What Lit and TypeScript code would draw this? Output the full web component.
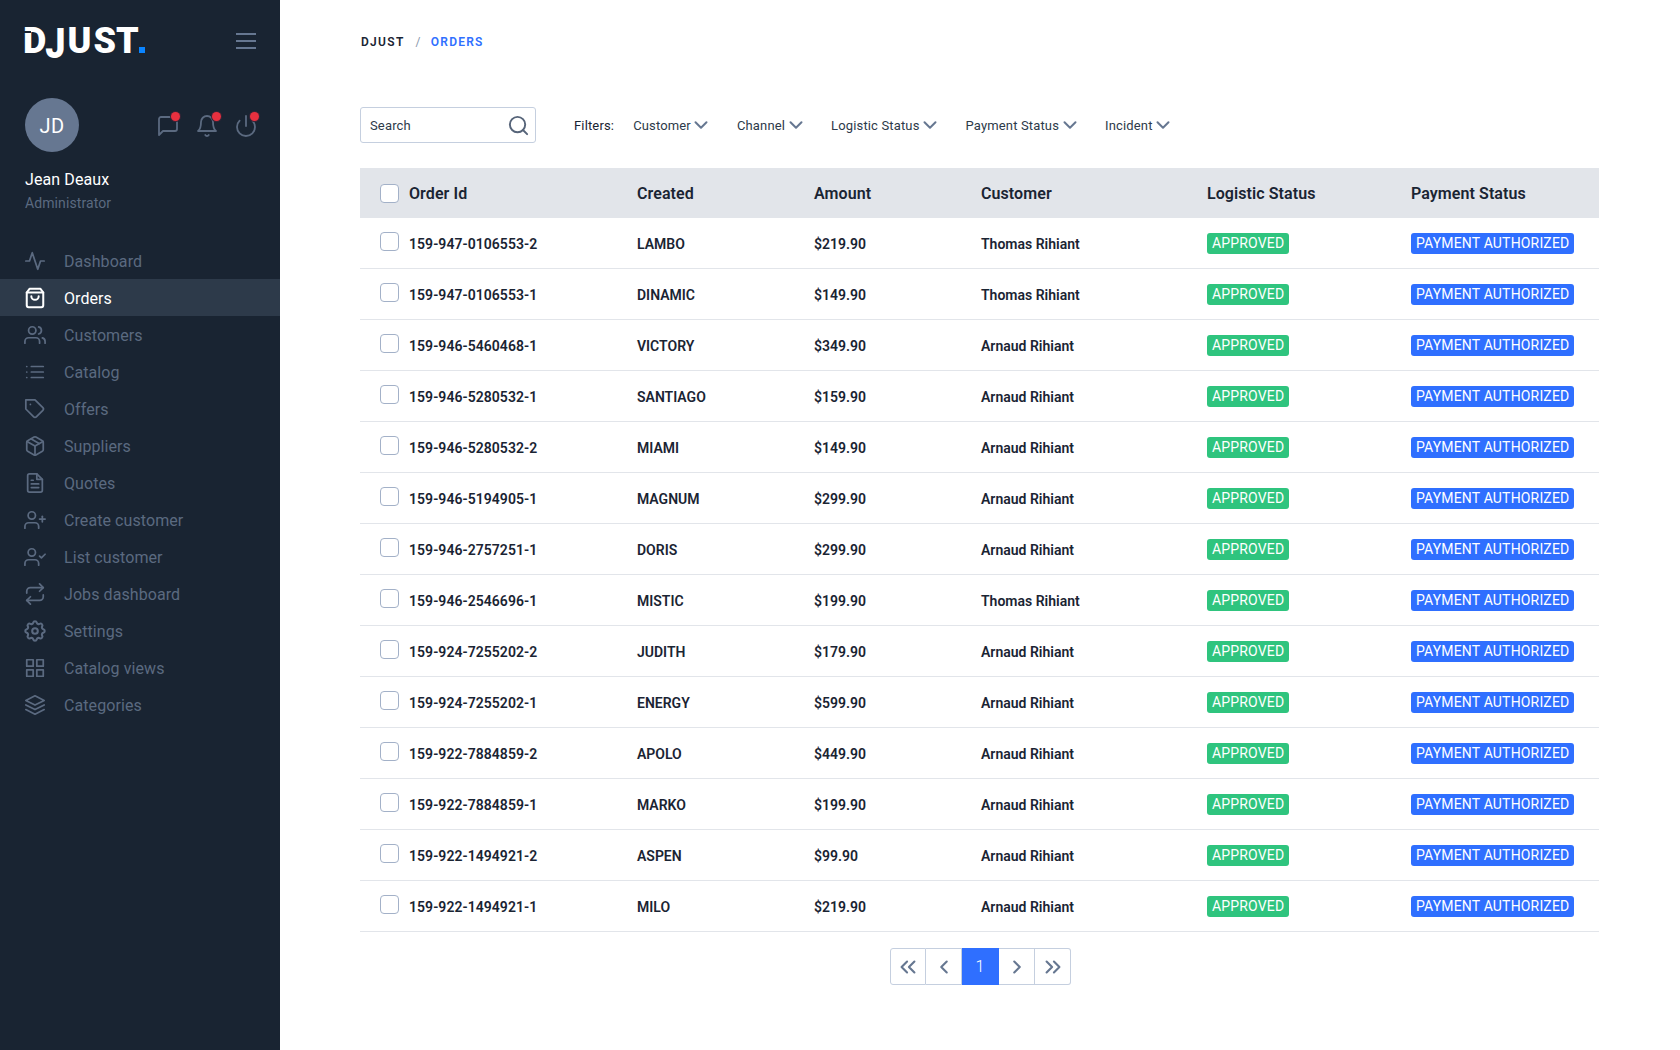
import { LitElement, html, css, svg } from "lit";
import { customElement } from "lit/decorators.js";

const icons: Record<string, unknown> = {
  activity: svg`<polyline points="22 12 18 12 15 21 9 3 6 12 2 12"/>`,
  bag: svg`<path d="M6 2L3 6v14a2 2 0 0 0 2 2h14a2 2 0 0 0 2-2V6l-3-4z"/><line x1="3" y1="6" x2="21" y2="6"/><path d="M16 10a4 4 0 0 1-8 0"/>`,
  users: svg`<path d="M17 21v-2a4 4 0 0 0-4-4H5a4 4 0 0 0-4 4v2"/><circle cx="9" cy="7" r="4"/><path d="M23 21v-2a4 4 0 0 0-3-3.87"/><path d="M16 3.13a4 4 0 0 1 0 7.75"/>`,
  list: svg`<line x1="8" y1="6" x2="21" y2="6"/><line x1="8" y1="12" x2="21" y2="12"/><line x1="8" y1="18" x2="21" y2="18"/><line x1="3" y1="6" x2="3.01" y2="6"/><line x1="3" y1="12" x2="3.01" y2="12"/><line x1="3" y1="18" x2="3.01" y2="18"/>`,
  tag: svg`<path d="M20.59 13.41l-7.17 7.17a2 2 0 0 1-2.83 0L2 12V2h10l8.59 8.59a2 2 0 0 1 0 2.82z"/><line x1="7" y1="7" x2="7.01" y2="7"/>`,
  box: svg`<line x1="16.5" y1="9.4" x2="7.5" y2="4.21"/><path d="M21 16V8a2 2 0 0 0-1-1.73l-7-4a2 2 0 0 0-2 0l-7 4A2 2 0 0 0 3 8v8a2 2 0 0 0 1 1.73l7 4a2 2 0 0 0 2 0l7-4A2 2 0 0 0 21 16z"/><polyline points="3.27 6.96 12 12.01 20.73 6.96"/><line x1="12" y1="22.08" x2="12" y2="12"/>`,
  file: svg`<path d="M14 2H6a2 2 0 0 0-2 2v16a2 2 0 0 0 2 2h12a2 2 0 0 0 2-2V8z"/><polyline points="14 2 14 8 20 8"/><line x1="16" y1="13" x2="8" y2="13"/><line x1="16" y1="17" x2="8" y2="17"/><polyline points="10 9 9 9 8 9"/>`,
  userPlus: svg`<path d="M16 21v-2a4 4 0 0 0-4-4H5a4 4 0 0 0-4 4v2"/><circle cx="8.5" cy="7" r="4"/><line x1="20" y1="8" x2="20" y2="14"/><line x1="23" y1="11" x2="17" y2="11"/>`,
  userCheck: svg`<path d="M16 21v-2a4 4 0 0 0-4-4H5a4 4 0 0 0-4 4v2"/><circle cx="8.5" cy="7" r="4"/><polyline points="17 11 19 13 23 9"/>`,
  repeat: svg`<polyline points="17 1 21 5 17 9"/><path d="M3 11V9a4 4 0 0 1 4-4h14"/><polyline points="7 23 3 19 7 15"/><path d="M21 13v2a4 4 0 0 1-4 4H3"/>`,
  settings: svg`<g transform="translate(12 12) scale(1.18) translate(-12 -12)"><path d="M10.325 4.317c.426-1.756 2.924-1.756 3.35 0a1.724 1.724 0 002.573 1.066c1.543-.94 3.31.826 2.37 2.37a1.724 1.724 0 001.065 2.572c1.756.426 1.756 2.924 0 3.35a1.724 1.724 0 00-1.066 2.573c.94 1.543-.826 3.31-2.37 2.37a1.724 1.724 0 00-2.572 1.065c-.426 1.756-2.924 1.756-3.35 0a1.724 1.724 0 00-2.573-1.066c-1.543.94-3.31-.826-2.37-2.37a1.724 1.724 0 00-1.065-2.572c-1.756-.426-1.756-2.924 0-3.35a1.724 1.724 0 001.066-2.573c-.94-1.543.826-3.31 2.37-2.37.996.608 2.296.07 2.572-1.065z"/><circle cx="12" cy="12" r="2.6"/></g>`,
  grid: svg`<rect x="3" y="3" width="7" height="7"/><rect x="14" y="3" width="7" height="7"/><rect x="14" y="14" width="7" height="7"/><rect x="3" y="14" width="7" height="7"/>`,
  layers: svg`<polygon points="12 2 2 7 12 12 22 7 12 2"/><polyline points="2 17 12 22 22 17"/><polyline points="2 12 12 17 22 12"/>`,
  message: svg`<path d="M21 15a2 2 0 0 1-2 2H7l-4 4V5a2 2 0 0 1 2-2h14a2 2 0 0 1 2 2z"/>`,
  bell: svg`<path d="M18 8A6 6 0 0 0 6 8c0 7-3 9-3 9h18s-3-2-3-9"/><path d="M13.73 21a2 2 0 0 1-3.46 0"/>`,
  power: svg`<path d="M18.36 6.64a9 9 0 1 1-12.73 0"/><line x1="12" y1="2" x2="12" y2="12"/>`,
  search: svg`<circle cx="11" cy="11" r="8"/><line x1="21" y1="21" x2="16.65" y2="16.65"/>`,
  down: svg`<polyline points="6 9 12 15 18 9"/>`,
  left: svg`<polyline points="15 18 9 12 15 6"/>`,
  right: svg`<polyline points="9 18 15 12 9 6"/>`,
  dleft: svg`<polyline points="11 18 5 12 11 6"/><polyline points="19 18 13 12 19 6"/>`,
  dright: svg`<polyline points="13 18 19 12 13 6"/><polyline points="5 18 11 12 5 6"/>`,
};

const icon = (name: string) => html`<svg class="ic" viewBox="0 0 24 24" fill="none" stroke="currentColor" stroke-linecap="round" stroke-linejoin="round">${icons[name]}</svg>`;

const nav = [
  ["activity", "Dashboard"], ["bag", "Orders"], ["users", "Customers"], ["list", "Catalog"],
  ["tag", "Offers"], ["box", "Suppliers"], ["file", "Quotes"], ["userPlus", "Create customer"],
  ["userCheck", "List customer"], ["repeat", "Jobs dashboard"], ["settings", "Settings"],
  ["grid", "Catalog views"], ["layers", "Categories"],
];

const orders = [
  ["159-947-0106553-2", "LAMBO", "$219.90", "Thomas Rihiant"],
  ["159-947-0106553-1", "DINAMIC", "$149.90", "Thomas Rihiant"],
  ["159-946-5460468-1", "VICTORY", "$349.90", "Arnaud Rihiant"],
  ["159-946-5280532-1", "SANTIAGO", "$159.90", "Arnaud Rihiant"],
  ["159-946-5280532-2", "MIAMI", "$149.90", "Arnaud Rihiant"],
  ["159-946-5194905-1", "MAGNUM", "$299.90", "Arnaud Rihiant"],
  ["159-946-2757251-1", "DORIS", "$299.90", "Arnaud Rihiant"],
  ["159-946-2546696-1", "MISTIC", "$199.90", "Thomas Rihiant"],
  ["159-924-7255202-2", "JUDITH", "$179.90", "Arnaud Rihiant"],
  ["159-924-7255202-1", "ENERGY", "$599.90", "Arnaud Rihiant"],
  ["159-922-7884859-2", "APOLO", "$449.90", "Arnaud Rihiant"],
  ["159-922-7884859-1", "MARKO", "$199.90", "Arnaud Rihiant"],
  ["159-922-1494921-2", "ASPEN", "$99.90", "Arnaud Rihiant"],
  ["159-922-1494921-1", "MILO", "$219.90", "Arnaud Rihiant"],
];

const filters = ["Customer", "Channel", "Logistic Status", "Payment Status", "Incident"];

@customElement("app-root")
export class AppRoot extends LitElement {
  static styles = css`
    :host { display: flex; min-height: 1050px; font-family: Roboto, "Liberation Sans", sans-serif; color: #1a2433; background: #fff; }
    * { box-sizing: border-box; }
    .ic { display: block; width: 24px; height: 24px; stroke-width: 1.8; flex: none; }

    .side { width: 280px; flex: none; background: #192432; color: #fff; min-height: 1050px; }
    .brand { display: flex; align-items: center; justify-content: space-between; height: 82px; padding: 0 23px 0 23px; }
    .logo { display: flex; align-items: baseline; font-weight: 900; font-size: 36px; line-height: 40px; color: #fff; position: relative; }
    .logo b { font-weight: inherit; display: block; }
    .logo .d { position: relative; }
    .logo .d::after { content: ""; position: absolute; left: 0; top: 10px; width: 8px; height: 1.5px; background: #192432; }
    .logo .j { transform: scaleY(1.19); transform-origin: 50% 7px; margin: 0 2px 0 -1px; }
    .logo .u { margin-right: 2px; }
    .logo .s { margin-right: 0; }
    .logo i { width: 6px; height: 6px; background: #0a84ff; margin-left: 0; }
    .burger { display: flex; flex-direction: column; gap: 5.5px; width: 20px; margin-right: 1px; }
    .burger span { height: 1.5px; background: #667791; }

    .profile { display: flex; align-items: center; justify-content: space-between; padding: 16px 22px 0 25px; }
    .avatar { width: 54px; height: 54px; border-radius: 50%; background: #667791; display: flex; align-items: center; justify-content: center; padding-top: 2px; font-size: 20px; letter-spacing: .3px; color: #fff; }
    .alerts { display: flex; gap: 15px; color: #5b6a80; margin-top: 1px; }
    .alert { position: relative; }
    .alert::after { content: ""; position: absolute; right: 0; top: -2px; width: 9px; height: 9px; border-radius: 50%; background: #e8303f; box-shadow: 0 0 0 1px #3a2436; }
    .alert.bell::after { right: -2px; }
    .alert.power::after { right: -1px; }
    .name { margin: 18px 0 0 25px; font-size: 16px; line-height: 20px; letter-spacing: .1px; color: #fff; }
    .role { margin: 3px 0 0 25px; font-size: 14px; line-height: 20px; letter-spacing: .1px; color: #5b6a80; }

    .nav { list-style: none; margin: 29px 0 0; padding: 0; }
    .nav li { display: flex; align-items: center; height: 37px; padding: 1px 0 0 24px; gap: 18px; color: #5b6a80; font-size: 16px; letter-spacing: .08px; }
    .nav li .ic { width: 22px; height: 22px; stroke-width: 1.9; }
    .nav li.on { background: #2d3a4a; color: #fff; }
    .nav li.on .ic { stroke-width: 2.2; }

    .main { flex: 1; min-width: 0; padding: 0 81px 0 80px; }
    .crumb { display: flex; align-items: center; height: 20px; margin-top: 32px; padding-left: 1px; font-size: 12px; font-weight: 600; letter-spacing: 1.3px; }
    .crumb .sep { margin: 0 9px 0 11px; color: #8a97ab; font-weight: 400; }
    .crumb .cur { color: #2f6fff; letter-spacing: 1.2px; }

    .tools { display: flex; align-items: center; height: 36px; margin-top: 55px; font-size: 13px; letter-spacing: .15px; }
    .search { display: flex; align-items: center; justify-content: space-between; width: 176px; height: 36px; border: 1px solid #c5cfdf; border-radius: 3px; padding: 0 5px 0 9px; color: #2d3a4a; }
    .search .ic { width: 23px; height: 23px; color: #566479; stroke-width: 2; }
    .flabel { margin-left: 38px; margin-right: 19px; }
    .filter { display: flex; align-items: center; gap: 0; margin-right: 24.5px; color: #2d3a4a; }
    .filter .ic { width: 22px; height: 22px; margin-left: -0.5px; color: #667791; stroke-width: 2.2; }

    table { width: 100%; margin-top: 25px; border-collapse: separate; border-spacing: 0; table-layout: fixed; }
    th { height: 50px; background: #e2e5ea; text-align: left; font-size: 16px; font-weight: 600; letter-spacing: .08px; padding: 0 0 0 20px; }
    td { height: 51px; border-bottom: 1px solid #e2e5ea; font-size: 14px; font-weight: 600; padding: 2px 0 0 20px; }
    .c1 { width: 257px; } .c2 { width: 177px; } .c3 { width: 167px; } .c4 { width: 226px; } .c5 { width: 204px; }
    .cell1 { display: flex; align-items: center; gap: 10px; }
    td .cell1 { letter-spacing: .05px; }
    .check { width: 19px; height: 19px; flex: none; border: 1px solid #a3b1c8; border-radius: 4px; background: #fff; }
    td .check { position: relative; top: -3px; }
    .badge { display: inline-block; height: 21px; line-height: 21px; padding: 0 5px; border-radius: 3px; color: #fff; font-size: 14px; font-weight: 400; letter-spacing: .17px; position: relative; top: -1px; }
    .green { background: #2fc47e; }
    .blue { background: #2f6fff; }

    .pages { display: flex; justify-content: center; margin-top: 16px; padding-left: 2px; }
    .pages .p { width: 36px; height: 37px; border: 1px solid #c5cfdf; border-left-width: 0; display: flex; align-items: center; justify-content: center; color: #667791; font-size: 16px; }
    .pages .p:first-child { border-left-width: 1px; border-radius: 3px 0 0 3px; }
    .pages .p:last-child { border-radius: 0 3px 3px 0; }
    .pages .p.on { background: #2f6fff; border-color: #2f6fff; color: #fff; width: 37px; font-weight: 300; }
    .pages .ic { width: 22px; height: 22px; stroke-width: 2.3; }
  `;

  render() {
    return html`
      <aside class="side">
        <div class="brand">
          <div class="logo"><b class="d">D</b><b class="j">J</b><b class="u">U</b><b class="s">S</b><b>T</b><i></i></div>
          <div class="burger"><span></span><span></span><span></span></div>
        </div>
        <div class="profile">
          <div class="avatar">JD</div>
          <div class="alerts">
            <div class="alert">${icon("message")}</div>
            <div class="alert bell">${icon("bell")}</div>
            <div class="alert power">${icon("power")}</div>
          </div>
        </div>
        <div class="name">Jean Deaux</div>
        <div class="role">Administrator</div>
        <ul class="nav">
          ${nav.map(([i, l]) => html`<li class=${l === "Orders" ? "on" : ""}>${icon(i)}<span>${l}</span></li>`)}
        </ul>
      </aside>
      <main class="main">
        <div class="crumb"><span>DJUST</span><span class="sep">/</span><span class="cur">ORDERS</span></div>
        <div class="tools">
          <div class="search"><span>Search</span>${icon("search")}</div>
          <span class="flabel">Filters:</span>
          ${filters.map((f) => html`<div class="filter"><span>${f}</span>${icon("down")}</div>`)}
        </div>
        <table>
          <thead>
            <tr>
              <th class="c1"><div class="cell1"><span class="check"></span>Order Id</div></th>
              <th class="c2">Created</th>
              <th class="c3">Amount</th>
              <th class="c4">Customer</th>
              <th class="c5">Logistic Status</th>
              <th>Payment Status</th>
            </tr>
          </thead>
          <tbody>
            ${orders.map((o) => html`<tr>
              <td><div class="cell1"><span class="check"></span>${o[0]}</div></td>
              <td>${o[1]}</td>
              <td>${o[2]}</td>
              <td>${o[3]}</td>
              <td><span class="badge green">APPROVED</span></td>
              <td><span class="badge blue">PAYMENT AUTHORIZED</span></td>
            </tr>`)}
          </tbody>
        </table>
        <div class="pages">
          <div class="p">${icon("dleft")}</div>
          <div class="p">${icon("left")}</div>
          <div class="p on">1</div>
          <div class="p">${icon("right")}</div>
          <div class="p">${icon("dright")}</div>
        </div>
      </main>
    `;
  }
}
